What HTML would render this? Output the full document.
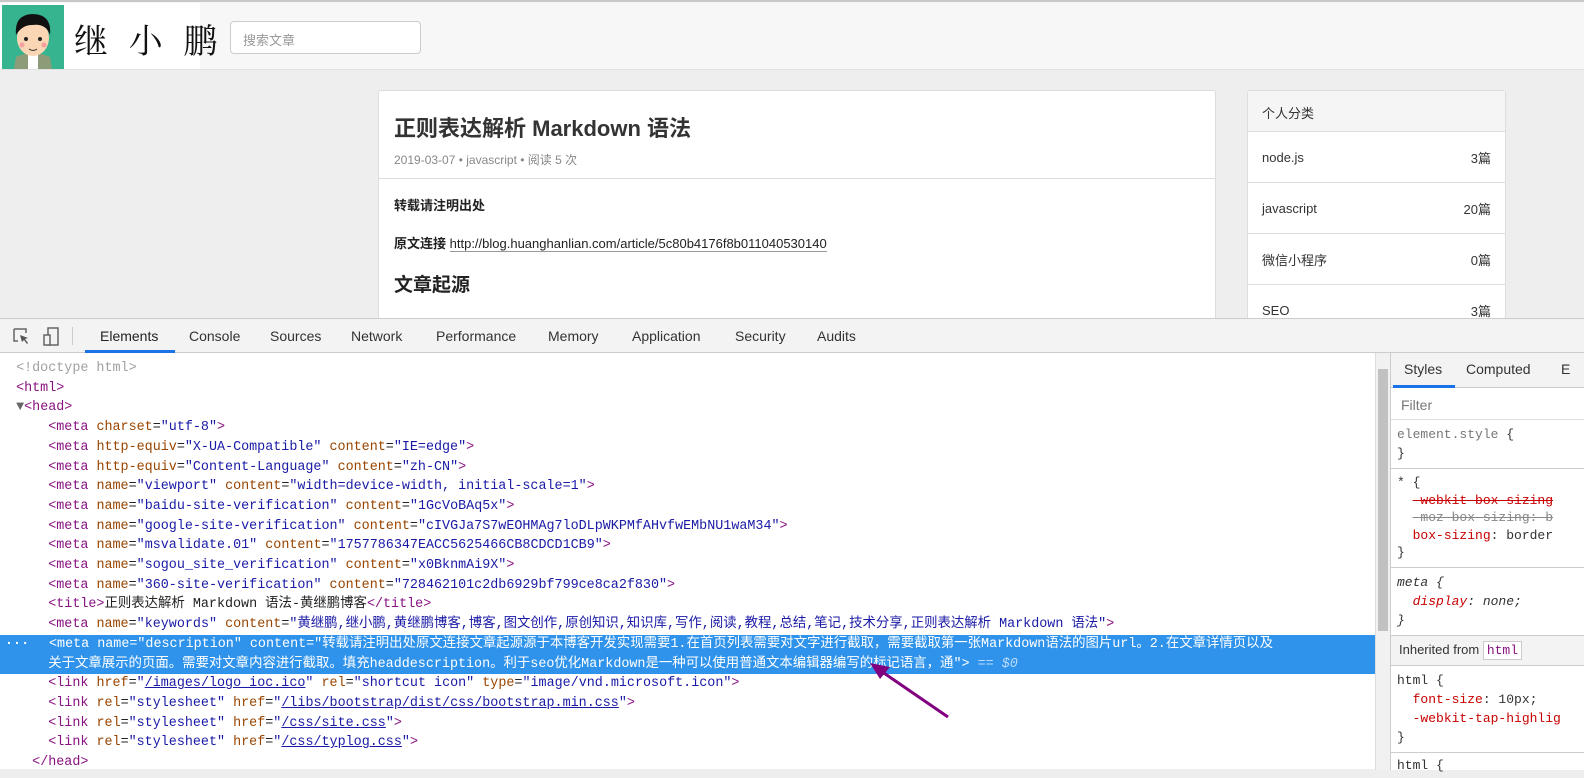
<!DOCTYPE html>
<html><head><meta charset="utf-8"><style>
*{box-sizing:border-box;margin:0;padding:0}
body{width:1584px;height:769px;overflow:hidden;background:#eee;font-family:"Liberation Sans","Noto Sans CJK SC",sans-serif;position:relative}
.abs{position:absolute}
.hdr{left:0;top:0;width:1584px;height:70px;background:#f7f7f7;border-top:2px solid #c8c8c8;border-bottom:1px solid #e2e2e2}
.logo{left:0;top:3px;width:200px;height:66px;background:#fff}
.av{left:2px;top:5px;width:62px;height:64px;background:#35b48f;overflow:hidden}
.brand{left:74px;top:14px;font-size:34px;font-family:"Noto Serif CJK SC",serif;letter-spacing:6px;color:#111}
.search{left:230px;top:21px;width:191px;height:33px;border:1px solid #ccc;border-radius:4px;background:#fff;font-size:13px;color:#999;padding:8px 12px}
.card{left:378px;top:90px;width:838px;height:240px;background:#fff;border:1px solid #ddd;border-radius:3px}
.side{left:1247px;top:90px;width:259px;height:240px;background:#fff;border:1px solid #ddd;border-radius:3px}
.side .h{height:41px;background:#f5f5f5;border-bottom:1px solid #ddd;font-size:13px;color:#333;padding:12px 0 0 14px}
.side .r{height:51px;border-bottom:1px solid #ddd;font-size:13px;color:#333;padding:0 14px;display:flex;justify-content:space-between;align-items:center}
.dev{left:0;top:318px;width:1584px;height:451px;background:#fff;border-top:1px solid #ccc}
.tb{left:0;top:0;width:1584px;height:34px;background:#f3f3f3;border-bottom:1px solid #ccc}
.tab{top:9px;font-size:14px;color:#333}
.code{left:0;top:40px;width:1375px;font-family:"Liberation Mono","Noto Sans CJK SC",monospace;font-size:13.4px;line-height:19.7px;white-space:pre;color:#222}
.t{color:#881280}.a{color:#994500}.v{color:#1a1aa6}.g{color:#a0a0a0}.u{color:#1a1aa6;text-decoration:underline}
.hl{background:#2f93ec;color:#fff}
.hl span{color:#fff}
.sb{left:1375px;top:34px;width:15px;height:417px;background:#f1f1f1;border-left:1px solid #ddd}
.rp{left:1390px;top:34px;width:194px;height:417px;border-left:1px solid #ccc;background:#fff;font-size:14px;color:#333}
.mono{font-family:"Liberation Mono",monospace;font-size:13px}
</style></head><body>
<div class="abs hdr"></div>
<div class="abs logo"></div>
<div class="abs av">
<svg width="62" height="64" viewBox="0 0 62 64"><rect width="62" height="64" fill="#35b48f"/><path d="M12 64 L14 52 Q31 44 48 52 L50 64Z" fill="#8c9b78"/><rect x="26" y="50" width="10" height="14" fill="#fff"/><ellipse cx="31" cy="33" rx="16" ry="18" fill="#fbd6b4"/><path d="M14 30 Q12 10 30 9 Q50 9 48 30 Q44 18 30 20 Q20 20 14 30Z" fill="#111"/><circle cx="24" cy="34" r="2" fill="#222"/><circle cx="38" cy="34" r="2" fill="#222"/><circle cx="20" cy="40" r="2.5" fill="#f4a0a0"/><circle cx="42" cy="40" r="2.5" fill="#f4a0a0"/><path d="M27 44 Q31 47 35 44" stroke="#333" fill="none"/></svg>
</div>
<div class="abs brand">继 小 鹏</div>
<div class="abs search">搜索文章</div>
<div class="abs card">
<div style="padding:20px 15px 0;font-size:22px;font-weight:bold;color:#333">正则表达解析 Markdown 语法</div>
<div style="padding:8px 15px 0;font-size:12px;color:#888">2019-03-07 • javascript • 阅读 5 次</div>
<div style="border-top:1px solid #ddd;margin-top:10px"></div>
<div style="padding:16px 15px 0;font-size:13px;font-weight:bold;color:#222">转载请注明出处</div>
<div style="padding:19px 15px 0;font-size:13px;color:#222"><b>原文连接</b> <span style="border-bottom:1px solid #999">http://blog.huanghanlian.com/article/5c80b4176f8b011040530140</span></div>
<div style="padding:18px 15px 0;font-size:19px;font-weight:bold;color:#222">文章起源</div>
<div style="padding:18px 15px 0;font-size:13px;color:#222">源于本博客开发实现需要</div>
</div>
<div class="abs side">
<div class="h">个人分类</div>
<div class="r"><span>node.js</span><span>3篇</span></div>
<div class="r"><span>javascript</span><span>20篇</span></div>
<div class="r"><span>微信小程序</span><span>0篇</span></div>
<div class="r"><span>SEO</span><span>3篇</span></div>
</div>
<div class="abs dev">
<div class="abs tb">
<svg class="abs" style="left:12px;top:8px" width="50" height="20"><path d="M2 2h12v4M2 2v12h4" stroke="#666" fill="none" stroke-width="1.5"/><path d="M8 8l8 3-3 1 3 4-1 1-3-4-2 2z" fill="#555"/><rect x="36" y="1" width="10" height="17" stroke="#666" fill="none" stroke-width="1.5"/><rect x="32" y="8" width="6" height="10" stroke="#666" fill="#f3f3f3" stroke-width="1.5"/></svg>
<div class="abs" style="left:72px;top:8px;width:1px;height:18px;background:#ccc"></div>
<div class="abs tab" style="left:100px;color:#222">Elements</div>
<div class="abs" style="left:85px;top:31px;width:90px;height:3px;background:#1a73e8"></div>
<div class="abs tab" style="left:189px">Console</div>
<div class="abs tab" style="left:270px">Sources</div>
<div class="abs tab" style="left:351px">Network</div>
<div class="abs tab" style="left:436px">Performance</div>
<div class="abs tab" style="left:548px">Memory</div>
<div class="abs tab" style="left:632px">Application</div>
<div class="abs tab" style="left:735px">Security</div>
<div class="abs tab" style="left:817px">Audits</div>
</div>
<div class="abs code"><span class="g">  &lt;!doctype html&gt;</span>
  <span class="t">&lt;html&gt;</span>
  <span style="color:#666">▼</span><span class="t">&lt;head&gt;</span>
      <span class="t">&lt;meta</span> <span class="a">charset</span>=<span class="v">"utf-8"</span><span class="t">&gt;</span>
      <span class="t">&lt;meta</span> <span class="a">http-equiv</span>=<span class="v">"X-UA-Compatible"</span> <span class="a">content</span>=<span class="v">"IE=edge"</span><span class="t">&gt;</span>
      <span class="t">&lt;meta</span> <span class="a">http-equiv</span>=<span class="v">"Content-Language"</span> <span class="a">content</span>=<span class="v">"zh-CN"</span><span class="t">&gt;</span>
      <span class="t">&lt;meta</span> <span class="a">name</span>=<span class="v">"viewport"</span> <span class="a">content</span>=<span class="v">"width=device-width, initial-scale=1"</span><span class="t">&gt;</span>
      <span class="t">&lt;meta</span> <span class="a">name</span>=<span class="v">"baidu-site-verification"</span> <span class="a">content</span>=<span class="v">"1GcVoBAq5x"</span><span class="t">&gt;</span>
      <span class="t">&lt;meta</span> <span class="a">name</span>=<span class="v">"google-site-verification"</span> <span class="a">content</span>=<span class="v">"cIVGJa7S7wEOHMAg7loDLpWKPMfAHvfwEMbNU1waM34"</span><span class="t">&gt;</span>
      <span class="t">&lt;meta</span> <span class="a">name</span>=<span class="v">"msvalidate.01"</span> <span class="a">content</span>=<span class="v">"1757786347EACC5625466CB8CDCD1CB9"</span><span class="t">&gt;</span>
      <span class="t">&lt;meta</span> <span class="a">name</span>=<span class="v">"sogou_site_verification"</span> <span class="a">content</span>=<span class="v">"x0BknmAi9X"</span><span class="t">&gt;</span>
      <span class="t">&lt;meta</span> <span class="a">name</span>=<span class="v">"360-site-verification"</span> <span class="a">content</span>=<span class="v">"728462101c2db6929bf799ce8ca2f830"</span><span class="t">&gt;</span>
      <span class="t">&lt;title&gt;</span>正则表达解析 Markdown 语法-黄继鹏博客<span class="t">&lt;/title&gt;</span>
      <span class="t">&lt;meta</span> <span class="a">name</span>=<span class="v">"keywords"</span> <span class="a">content</span>=<span class="v">"黄继鹏,继小鹏,黄继鹏博客,博客,图文创作,原创知识,知识库,写作,阅读,教程,总结,笔记,技术分享,正则表达解析 Markdown 语法"</span><span class="t">&gt;</span>
<div class="hl"><span style="display:inline-block;width:49px;padding-left:5px;font-weight:bold">···</span>&lt;meta name="description" content="转载请注明出处原文连接文章起源源于本博客开发实现需要1.在首页列表需要对文字进行截取，需要截取第一张Markdown语法的图片url。2.在文章详情页以及
      关于文章展示的页面。需要对文章内容进行截取。填充headdescription。利于seo优化Markdown是一种可以使用普通文本编辑器编写的标记语言，通"&gt; <i style="color:#bcdcfb">== $0</i></div>      <span class="t">&lt;link</span> <span class="a">href</span>=<span class="v">"<span class="u">/images/logo_ioc.ico</span>"</span> <span class="a">rel</span>=<span class="v">"shortcut icon"</span> <span class="a">type</span>=<span class="v">"image/vnd.microsoft.icon"</span><span class="t">&gt;</span>
      <span class="t">&lt;link</span> <span class="a">rel</span>=<span class="v">"stylesheet"</span> <span class="a">href</span>=<span class="v">"<span class="u">/libs/bootstrap/dist/css/bootstrap.min.css</span>"</span><span class="t">&gt;</span>
      <span class="t">&lt;link</span> <span class="a">rel</span>=<span class="v">"stylesheet"</span> <span class="a">href</span>=<span class="v">"<span class="u">/css/site.css</span>"</span><span class="t">&gt;</span>
      <span class="t">&lt;link</span> <span class="a">rel</span>=<span class="v">"stylesheet"</span> <span class="a">href</span>=<span class="v">"<span class="u">/css/typlog.css</span>"</span><span class="t">&gt;</span>
    <span class="t">&lt;/head&gt;</span></div>
<svg class="abs" style="left:860px;top:340px" width="100" height="80"><line x1="88" y1="58" x2="18" y2="10" stroke="#800080" stroke-width="3"/><path d="M10 4 L30 8 L20 20Z" fill="#800080"/></svg>
<div class="abs sb"><div style="position:absolute;left:2px;top:16px;width:10px;height:262px;background:#c1c1c1"></div></div>
<div class="abs rp">
<div style="height:35px;border-bottom:1px solid #ccc;background:#f3f3f3;position:relative">
<span class="abs" style="left:13px;top:8px">Styles</span><span class="abs" style="left:75px;top:8px">Computed</span><span class="abs" style="left:170px;top:8px">E</span>
<div class="abs" style="left:2px;top:32px;width:62px;height:3px;background:#1a73e8"></div></div>
<div style="height:32px;border-bottom:1px solid #ddd;padding:9px 10px;color:#777">Filter</div>
<div class="mono" style="padding:5px 6px;line-height:19px;border-bottom:1px solid #ccc"><span style="color:#777">element.style</span> {<br>}</div>
<div class="mono" style="padding:5px 6px;line-height:17.5px;border-bottom:1px solid #ccc">* {<br>&nbsp;&nbsp;<s style="color:#c80000">-webkit-box-sizing</s><br>&nbsp;&nbsp;<s style="color:#888">-moz-box-sizing: b</s><br>&nbsp;&nbsp;<span style="color:#c80000">box-sizing</span>: border<br>}</div>
<div class="mono" style="padding:5px 6px;line-height:19px;border-bottom:1px solid #ccc;font-style:italic">meta {<br>&nbsp;&nbsp;<span style="color:#c80000">display</span>: none;<br>}</div>
<div style="height:30px;background:#f3f3f3;border-bottom:1px solid #ccc;padding:6px 8px;font-size:13px">Inherited from <span class="mono t" style="border:1px solid #ccc;background:#fff;padding:1px 3px">html</span></div>
<div class="mono" style="padding:5px 6px;line-height:19px;border-bottom:1px solid #ccc">html {<br>&nbsp;&nbsp;<span style="color:#c80000">font-size</span>: 10px;<br>&nbsp;&nbsp;<span style="color:#c80000">-webkit-tap-highlig</span><br>}</div>
<div class="mono" style="padding:5px 6px">html {</div>
</div>
</div>
</body></html>
